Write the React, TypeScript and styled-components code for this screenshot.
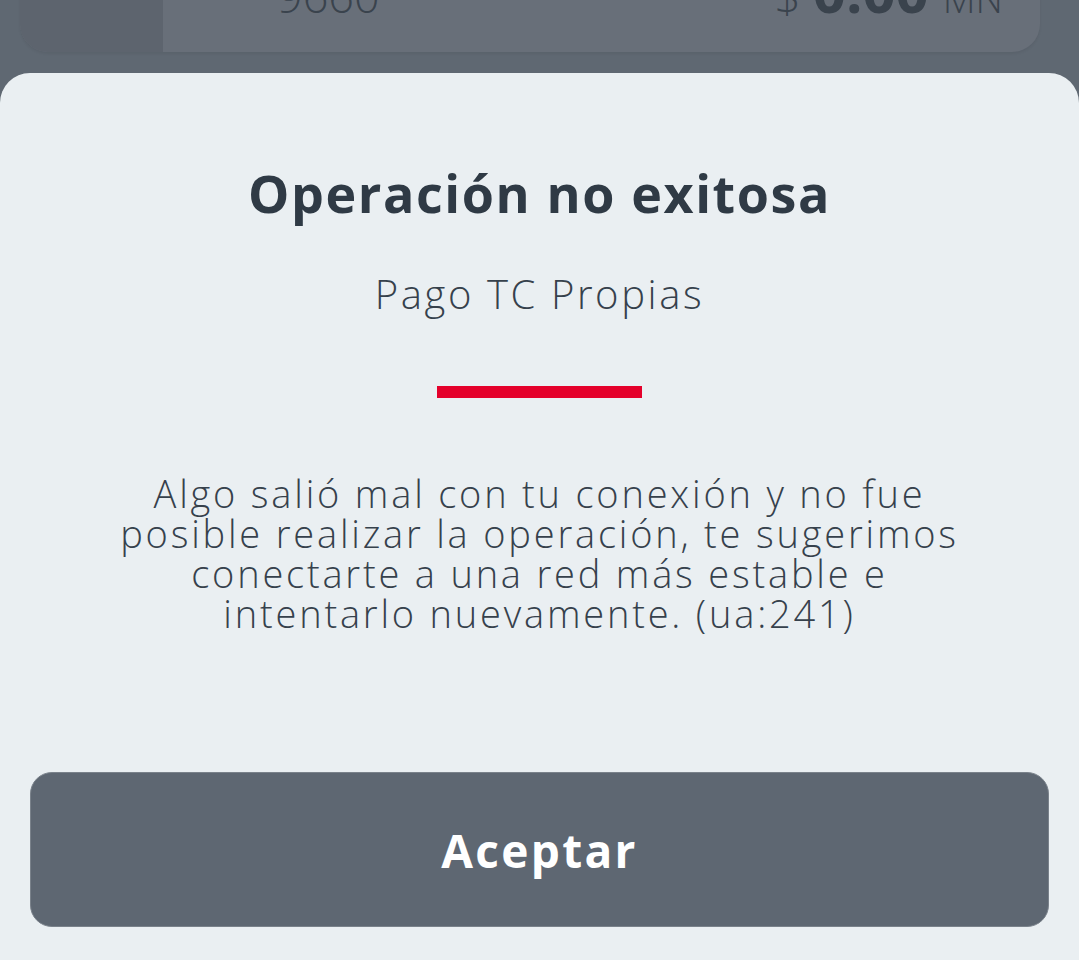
import React from 'react'
import styled, {createGlobalStyle} from 'styled-components'

const GlobalStyle = createGlobalStyle`
  * { box-sizing: border-box; }
  html, body { margin: 0; padding: 0; }
  body {
    background-color: #5f6872;
    font-family: "Open Sans", "Noto Sans", sans-serif;
    overflow: hidden;
  }
`

const Screen = styled.div`
  height: 960px;
  display: flex;
  flex-direction: column;
  background-color: #5f6872;
`

// card behind the overlay, cut off by the top edge
const AccountCard = styled.div`
  margin: -88px 39px 0 20px;
  height: 140px;
  border-radius: 28px;
  background-color: #686f79;
  box-shadow: 0 2px 3px rgba(0, 0, 0, 0.06);
  display: flex;
  overflow: hidden;

  > .strip {
    width: 143px;
    background-color: #5d646e;
  }

  > .row {
    flex-grow: 1;
    display: flex;
    justify-content: space-between;
    align-items: baseline;
    padding: 49px 37px 0 114px;
    color: #3a434d;
    font-size: 45px;
    font-weight: 300;
    line-height: 60px;
  }

  .amount { font-size: 38px; }
  .amount .sign { font-size: 46px; }
  .amount b { font-size: 58px; font-weight: 700; margin: 0 14px 0 12px; }
`

const Sheet = styled.section`
  margin-top: 21px;
  flex-grow: 1;
  background-color: #eaeff2;
  border-radius: 30px 30px 0 0;
  display: flex;
  flex-direction: column;
  align-items: center;
  padding: 0 30px;
  color: #2f3a45;
`

const Title = styled.h1`
  margin: 90px 0 0;
  font-size: 52px;
  font-weight: 700;
  line-height: 60px;
  letter-spacing: 1.6px;
`

const Subtitle = styled.p`
  margin: 49px 0 0;
  font-size: 40px;
  font-weight: 300;
  line-height: 44px;
  letter-spacing: 2.6px;
  color: #36414c;
`

const Divider = styled.div`
  margin-top: 70px;
  width: 205px;
  height: 12px;
  background-color: #e4002b;
`

const Message = styled.p`
  margin: 75px 0 0;
  font-size: 38px;
  font-weight: 300;
  line-height: 40px;
  letter-spacing: 2.8px;
  text-align: center;
  white-space: nowrap;
  color: #36414c;
`

const AcceptButton = styled.button`
  margin-top: 139px;
  width: 100%;
  height: 155px;
  border: 1px solid #7a828b;
  border-radius: 22px;
  background-color: #5e6772;
  color: #fff;
  font-family: "Open Sans", "Noto Sans", sans-serif;
  font-size: 46px;
  font-weight: 700;
  letter-spacing: 2.3px;
`

export default function App() {
  return (
    <Screen>
      <GlobalStyle />
      <AccountCard>
        <div className="strip" />
        <div className="row">
          <span>9660</span>
          <span className="amount"><span className="sign">$</span><b>0.00</b>MN</span>
        </div>
      </AccountCard>
      <Sheet>
        <Title>Operación no exitosa</Title>
        <Subtitle>Pago TC Propias</Subtitle>
        <Divider />
        <Message>
          Algo salió mal con tu conexión y no fue<br />
          posible realizar la operación, te sugerimos<br />
          conectarte a una red más estable e<br />
          intentarlo nuevamente. (ua:241)
        </Message>
        <AcceptButton>Aceptar</AcceptButton>
      </Sheet>
    </Screen>
  )
}
